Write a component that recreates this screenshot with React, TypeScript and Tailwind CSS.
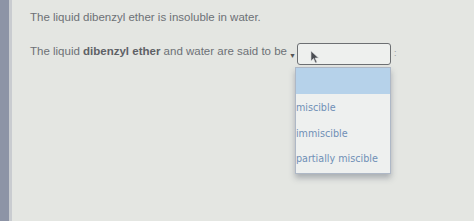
export default function App() {
  return (
    <div className="relative flex h-[221px] w-[474px] overflow-hidden bg-[#e4e6e2] font-['Liberation_Sans',Arial,sans-serif] text-[#6d7176]">
      <div className="w-[9px] shrink-0 bg-[#8d94a6]" />
      <div className="w-[3px] shrink-0 bg-[#c9ccd0]" />
      <div className="flex flex-col pl-[18px] pt-[10px]">
        <p className="text-[11.5px] leading-[14px]">The liquid dibenzyl ether is insoluble in water.</p>
        <div className="mt-[19px] flex items-start">
          <p className="pt-[1px] text-[11.5px] leading-[14px]">
            The liquid <b className="font-bold text-[#5e6166]">dibenzyl ether</b> and water are said to be
          </p>
          <span className="ml-[2px] mt-[9px] text-[7px] leading-none text-[#555]">▼</span>
          <div className="ml-[1px] flex flex-col">
            <div className="relative h-[22px] w-[94px] rounded-[3px] border-[1.5px] border-[#6c6f72] bg-[#eef0ee]">
              <svg className="absolute left-[12px] top-[6px]" width="10" height="14" viewBox="0 0 10 14">
                <path d="M1 1 L1 11 L3.5 8.5 L5.5 13 L7 12.3 L5 8 L8.5 8 Z" fill="#4a4d52" stroke="#d8dadb" strokeWidth="0.6" />
              </svg>
            </div>
            <div className="mt-[2px] w-[96px] -ml-[2px] border border-[#aeb8c6] bg-[#eef0ef] shadow-[0_4px_6px_rgba(60,70,90,0.35)]">
              <div className="h-[26px] bg-[#b6d2ea]" />
              <ul className="font-['DejaVu_Sans',sans-serif] text-[9.6px] leading-[25.5px] text-[#6f8fb6]">
                <li className="pt-[1px]">miscible</li>
                <li>immiscible</li>
                <li className="pb-[1px]">partially miscible</li>
              </ul>
            </div>
          </div>
          <span className="ml-[3px] mt-[4px] text-[9px] text-[#9a9da0]">:</span>
        </div>
      </div>
    </div>
  );
}
